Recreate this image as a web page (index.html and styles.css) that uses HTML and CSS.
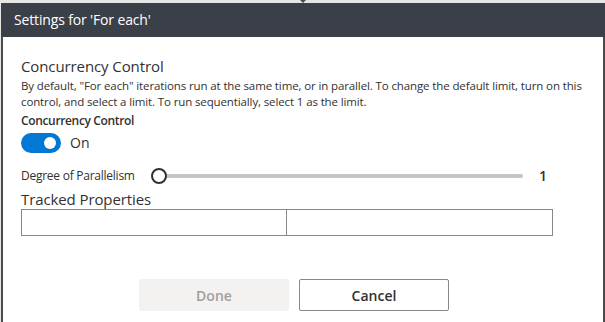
FILE: index.html
```html
<!DOCTYPE html>
<html lang="en">
<head>
<meta charset="utf-8">
<title>Settings for 'For each'</title>
<link rel="stylesheet" href="styles.css">
</head>
<body>
<div class="top-strip"><span class="caret"></span></div>
<div class="dialog">
  <div class="dialog-header">
    <h1 class="dialog-title">Settings for 'For each'</h1>
  </div>
  <div class="dialog-body">
    <section class="section">
      <h2 class="section-title">Concurrency Control</h2>
      <p class="section-desc">By default, "For each" iterations run at the same time, or in parallel. To change the default limit, turn on this control, and select a limit. To run sequentially, select 1 as the limit.</p>
      <div class="field-label">Concurrency Control</div>
      <div class="toggle-row">
        <span class="toggle"><span class="toggle-knob"></span></span>
        <span class="toggle-text">On</span>
      </div>
      <div class="slider-row">
        <span class="slider-label">Degree of Parallelism</span>
        <div class="slider">
          <div class="slider-track"></div>
          <span class="slider-thumb"></span>
        </div>
        <span class="slider-value">1</span>
      </div>
    </section>
    <section class="section tracked">
      <h2 class="section-title">Tracked Properties</h2>
      <div class="props">
        <input class="prop-input" type="text">
        <input class="prop-input second" type="text">
      </div>
    </section>
    <div class="footer">
      <button class="btn btn-primary" disabled>Done</button>
      <button class="btn btn-default">Cancel</button>
    </div>
  </div>
</div>
</body>
</html>
```
FILE: styles.css
```css
* { box-sizing: border-box; }
html, body { margin: 0; padding: 0; }
body {
  width: 605px;
  height: 322px;
  overflow: hidden;
  background: #e6e6e6;
  font-family: "Open Sans", "Noto Sans", sans-serif;
  color: #323130;
}
.top-strip {
  height: 3px;
  position: relative;
}
.caret {
  position: absolute;
  left: 300px;
  top: 0;
  width: 0;
  height: 0;
  border-left: 3px solid transparent;
  border-right: 3px solid transparent;
  border-top: 3px solid #4a4a4a;
}
.dialog {
  margin-left: 1px;
  width: 604px;
  height: 319px;
  background: #fff;
  display: flex;
  flex-direction: column;
}
.dialog-header {
  height: 34px;
  background: #3b4048;
  display: flex;
  align-items: center;
  padding-left: 13px;
}
.dialog-title {
  margin: 0;
  font-size: 14px;
  font-weight: 400;
  color: #fff;
  line-height: 20px;
  letter-spacing: -0.15px;
}
.dialog-body {
  flex: 1;
  border-left: 2px solid #4a4a4a;
  border-right: 2px solid #4a4a4a;
  padding: 19px 18px 0 18px;
}
.section-title {
  margin: 0;
  font-size: 15px;
  line-height: 20px;
  font-weight: 400;
  letter-spacing: -0.1px;
}
.section-desc {
  margin: 2px 0 0;
  font-size: 11.5px;
  line-height: 16px;
  letter-spacing: -0.12px;
}
.field-label {
  margin-top: 3px;
  font-size: 12px;
  line-height: 16px;
  font-weight: 600;
  letter-spacing: -0.35px;
}
.toggle-row {
  margin-top: 4px;
  display: flex;
  align-items: center;
  height: 20px;
}
.toggle {
  width: 40px;
  height: 20px;
  border-radius: 10px;
  background: #0078d4;
  display: flex;
  align-items: center;
  justify-content: flex-end;
  padding-right: 5px;
}
.toggle-knob {
  width: 12px;
  height: 12px;
  border-radius: 50%;
  background: #fff;
}
.toggle-text {
  margin-left: 9px;
  font-size: 14px;
  line-height: 20px;
}
.slider-row {
  margin-top: 15px;
  height: 16px;
  display: flex;
  align-items: center;
}
.slider-label {
  width: 130px;
  font-size: 12px;
  line-height: 16px;
  letter-spacing: -0.25px;
}
.slider {
  position: relative;
  width: 380px;
  height: 16px;
  padding: 0 8px;
  display: flex;
  align-items: center;
}
.slider-track {
  width: 100%;
  height: 4px;
  border-radius: 4px;
  background: #c8c6c4;
}
.slider-thumb {
  position: absolute;
  left: 0;
  top: 0;
  width: 16px;
  height: 16px;
  border-radius: 50%;
  border: 2px solid #323130;
  background: #fff;
}
.slider-value {
  margin-left: 8px;
  font-size: 14px;
  font-weight: 600;
  line-height: 16px;
}
.tracked { margin-top: 5px; }
.props {
  display: flex;
  width: 532px;
}
.prop-input {
  width: 266px;
  height: 27px;
  border: 1px solid #8a8886;
  margin: 0;
  padding: 0 8px;
  font: inherit;
  background: #fff;
}
.prop-input.second { margin-left: -1px; width: 267px; }
.footer {
  margin-top: 43px;
  padding-left: 118px;
  display: flex;
  gap: 10px;
}
.btn {
  width: 150px;
  height: 32px;
  border-radius: 2px;
  font-family: inherit;
  font-size: 14px;
  font-weight: 600;
  padding: 0;
}
.btn-primary {
  background: #f3f2f1;
  border: 1px solid #f3f2f1;
  color: #a19f9d;
}
.btn-default {
  background: #fff;
  border: 1px solid #8a8886;
  color: #323130;
}
```
